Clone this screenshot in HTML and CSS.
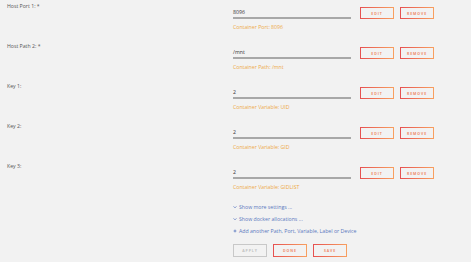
FILE: index.html
```html
<!DOCTYPE html>
<html lang="en">
<head>
<meta charset="UTF-8" />
<title>Docker Container Settings</title>
<link rel="stylesheet" href="styles.css">
</head>
<body>

<div class="panel">

  <div class="row">
    <div class="label">Host Port 1: *</div>
    <div class="field">
      <div class="input">8096</div>
      <div class="help">Container Port: 8096</div>
    </div>
    <button class="btn edit">EDIT</button>
    <button class="btn remove">REMOVE</button>
  </div>

  <div class="row">
    <div class="label">Host Path 2: *</div>
    <div class="field">
      <div class="input">/mnt</div>
      <div class="help">Container Path: /mnt</div>
    </div>
    <button class="btn edit">EDIT</button>
    <button class="btn remove">REMOVE</button>
  </div>

  <div class="row">
    <div class="label">Key 1:</div>
    <div class="field">
      <div class="input">2</div>
      <div class="help">Container Variable: UID</div>
    </div>
    <button class="btn edit">EDIT</button>
    <button class="btn remove">REMOVE</button>
  </div>

  <div class="row">
    <div class="label">Key 2:</div>
    <div class="field">
      <div class="input">2</div>
      <div class="help">Container Variable: GID</div>
    </div>
    <button class="btn edit">EDIT</button>
    <button class="btn remove">REMOVE</button>
  </div>

  <div class="row">
    <div class="label">Key 3:</div>
    <div class="field">
      <div class="input">2</div>
      <div class="help">Container Variable: GIDLIST</div>
    </div>
    <button class="btn edit">EDIT</button>
    <button class="btn remove">REMOVE</button>
  </div>

  <div class="links">
    <a href="#"><svg viewBox="0 0 10 10" class="ico"><path d="M1.5 3.5 L5 7 L8.5 3.5" fill="none" stroke="currentColor" stroke-width="2"/></svg>Show more settings ...</a>
    <a href="#"><svg viewBox="0 0 10 10" class="ico"><path d="M1.5 3.5 L5 7 L8.5 3.5" fill="none" stroke="currentColor" stroke-width="2"/></svg>Show docker allocations ...</a>
    <a href="#"><svg viewBox="0 0 10 10" class="ico"><path d="M5 1.5 V8.5 M1.5 5 H8.5" fill="none" stroke="currentColor" stroke-width="2"/></svg>Add another Path, Port, Variable, Label or Device</a>
  </div>

  <div class="actions">
    <button class="btn off">APPLY</button>
    <button class="btn">DONE</button>
    <button class="btn">SAVE</button>
  </div>

</div>

</body>
</html>
```

FILE: styles.css
```css
:root {
  --bg: #f2f2f2;
  --red: #e65050;
  --orange: #f8a060;
  --help: #eeaa48;
  --link: #5a78c0;
}
* { margin:0; padding:0; box-sizing:border-box; }
body {
  background:#fff;
  font-family: 'Open Sans', sans-serif;
  color:#555;
}
.panel {
  width:471px; height:262px;
  background:var(--bg);
}
.row {
  display:grid;
  grid-template-columns: 233px 118px 43px 40px;
  height:40px;
  align-items:start;
}
.label {
  padding:2px 0 0 7px;
  font-size:5.2px; line-height:8px;
  color:#555;
}
.field { padding-top:7px; }
.input {
  height:12px;
  border-bottom:2px solid #a8a8a8;
  font-size:5.2px; line-height:10px;
  color:#333;
}
.help {
  margin-top:4px;
  font-size:5.2px; line-height:8px;
  color:var(--help);
}
.btn {
  width:34px; height:12px;
  margin-top:7px;
  background:var(--bg);
  border:1px solid;
  border-image:linear-gradient(90deg, var(--red), var(--orange)) 1;
  font-family:'Open Sans', sans-serif;
  font-size:3.5px; font-weight:700;
  letter-spacing:0.9px;
  color:#ef8a6a;
  cursor:pointer;
}
.edit { margin-left:9px; }
.remove { margin-left:6px; }
.links {
  padding:1px 0 0 233px;
  display:flex; flex-direction:column;
}
.links a {
  height:12px;
  display:flex; align-items:center; gap:2px;
  font-size:5.2px;
  color:var(--link);
  text-decoration:none;
}
.ico { width:4px; height:4px; }
.actions {
  display:flex; gap:6px;
  padding:7px 0 0 233px;
}
.actions .btn { margin-top:0; height:13px; }
.btn.off {
  border-image:none;
  border-color:#c8c8c8;
  color:#c0c0c0;
}
```
